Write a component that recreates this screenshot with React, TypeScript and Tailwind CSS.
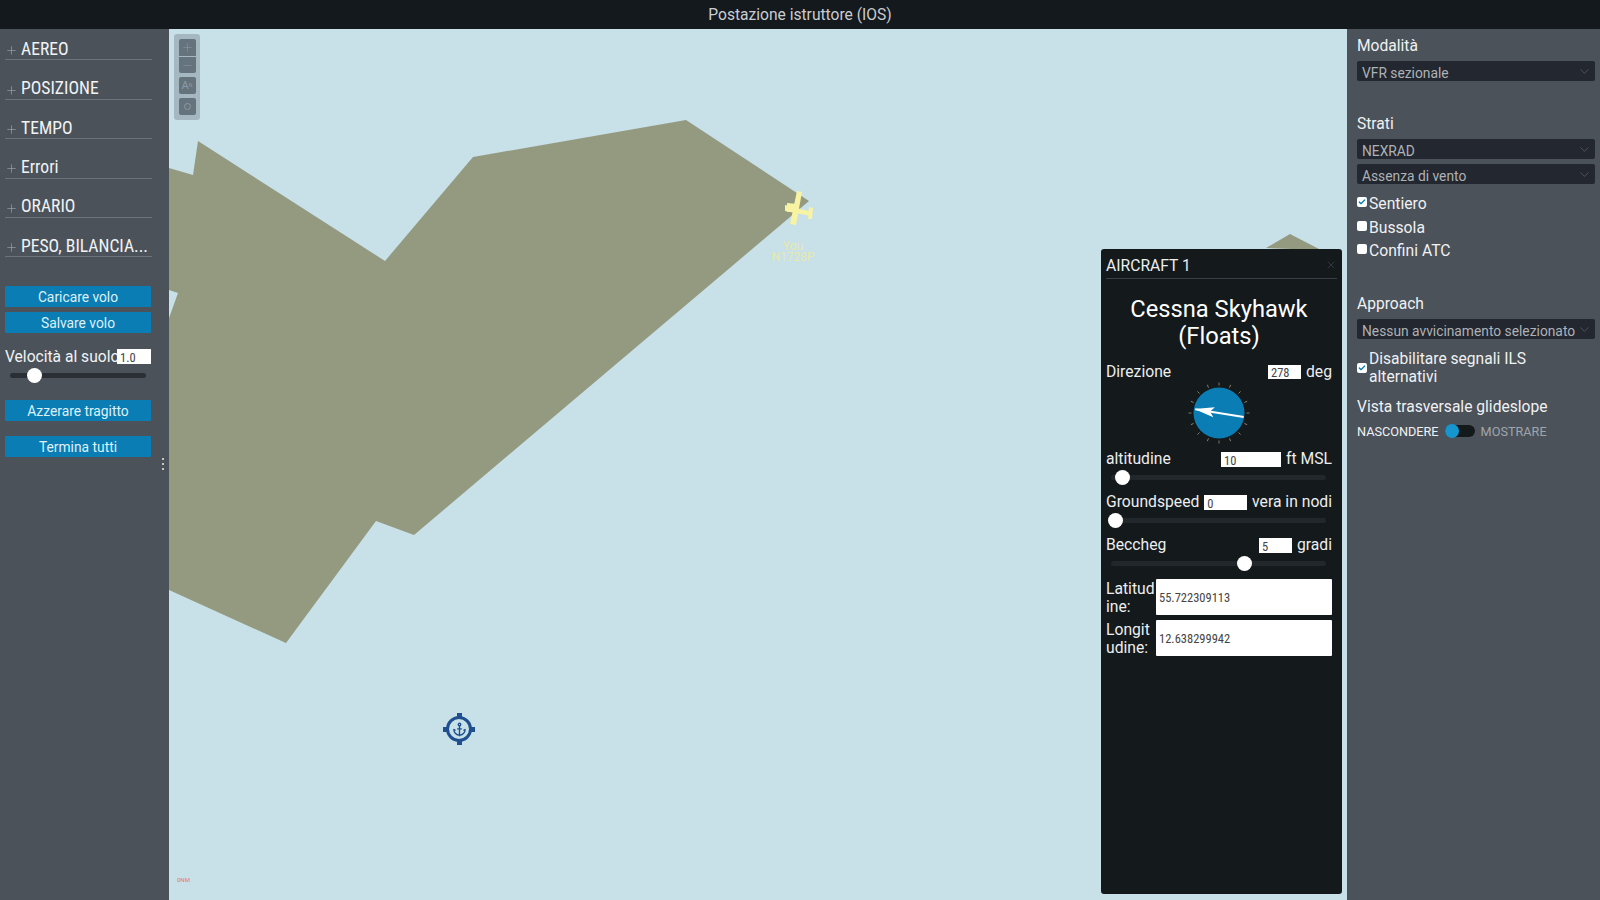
import { Anchor, ChevronDown, Plus, Minus, X, Check } from "lucide-react";

const SECTIONS = ["AEREO", "POSIZIONE", "TEMPO", "Errori", "ORARIO", "PESO, BILANCIA..."];

const LAND = "169,168 193,175 198,141 385,261 473,157 686,120 809,201 414,535 376,521 286,643 169,590 169,318 178,293 169,290";

function Slider({ pos, track = "bg-[#22272c]" }: { pos: number; track?: string }) {
  return (
    <div className={`relative h-[5px] rounded-full ${track}`}>
      <div
        className="absolute top-[-5px] w-[15px] h-[15px] -ml-[7px] rounded-full bg-white"
        style={{ left: pos }}
      />
    </div>
  );
}

function Field({ value, className }: { value: string; className: string }) {
  return (
    <div className={`bg-white text-[#444] text-[12.5px] leading-none pl-[3px] pt-[3px] overflow-hidden [font-stretch:condensed] ${className}`}>
      {value}
    </div>
  );
}

function BlueButton({ label, className = "" }: { label: string; className?: string }) {
  return (
    <div className={`h-[21px] ml-[5px] w-[146px] bg-[#0a7db5] rounded-[1px] text-[#dff1f8] text-[13.8px] leading-[22px] text-center ${className}`}>
      {label}
    </div>
  );
}

function Select({ label, className = "" }: { label: string; className?: string }) {
  return (
    <div className={`h-[20px] w-[238px] bg-[#23272f] rounded-[2px] flex items-center justify-between pl-[5px] pr-[3px] text-[13.8px] text-[#aeb2b7] ${className}`}>
      <span className="leading-[20px] mt-[3px] whitespace-nowrap">{label}</span>
      <ChevronDown size={15} strokeWidth={1} className="text-[#666c74] shrink-0" />
    </div>
  );
}

function CheckRow({ label, checked = false }: { label: string; checked?: boolean }) {
  return (
    <div className="flex items-start h-[23.7px] text-[15.7px] text-[#f0f1f2] leading-[18px]">
      <span className="w-[10px] h-[10px] mt-[2px] mr-[2px] rounded-[2px] bg-white flex items-center justify-center shrink-0">
        {checked && <Check size={8} strokeWidth={4} className="text-[#0a7db5]" />}
      </span>
      {label}
    </div>
  );
}

function Dial() {
  const ticks = Array.from({ length: 16 }, (_, i) => i * 22.5);
  return (
    <svg width="64" height="64" viewBox="-32 -32 64 64" className="mx-auto mt-[-2px]">
      {ticks.map((a) => (
        <line key={a} x1="0" y1="-27.5" x2="0" y2="-30.5" stroke="#9a8f73" strokeWidth="0.8" transform={`rotate(${a})`} />
      ))}
      <circle r="25.5" fill="#0a7db5" />
      <g transform="rotate(-81)">
        <line x1="0" y1="25" x2="0" y2="-24" stroke="#fff" strokeWidth="2" />
        <polygon points="0,-25 5,-5 0,-9 -5,-5" fill="#fff" />
      </g>
    </svg>
  );
}

function AircraftPanel() {
  return (
    <div className="absolute left-[932px] top-[220px] w-[241px] h-[645px] bg-[#14191c] rounded-[3px] px-[5px] text-[15.7px] text-[#eceeef]">
      <div className="relative h-[30px] mb-[17px] border-b border-[#3a4046] leading-[33px]">
        AIRCRAFT 1
        <X size={12} strokeWidth={1} className="absolute right-[0px] top-[10px] text-[#50565c]" />
      </div>
      <div className="text-[23.7px] leading-[27px] text-center text-white pr-[5px]">
        Cessna Skyhawk
        <br />
        (Floats)
      </div>
      <div className="flex items-center justify-between pr-[5px] mt-[11px] h-[22px]">
        <span>Direzione</span>
        <span className="flex items-center gap-[5px]">
          <Field value="278" className="w-[33px] h-[14px] !pt-[2px]" />
          deg
        </span>
      </div>
      <div className="pr-[5px]">
        <Dial />
      </div>
      <div className="flex items-center justify-between pr-[5px] mt-[3px] h-[22px]">
        <span>altitudine</span>
        <span className="flex items-center gap-[5px]">
          <Field value="10" className="w-[60px] h-[15px]" />
          ft MSL
        </span>
      </div>
      <div className="pl-[5px] pr-[11px] mt-[5px]">
        <Slider pos={10.5} />
      </div>
      <div className="flex items-center justify-between pr-[5px] mt-[11px] h-[22px]">
        <span>Groundspeed</span>
        <Field value="0" className="w-[43px] h-[15px]" />
        <span>vera in nodi</span>
      </div>
      <div className="pl-[5px] pr-[11px] mt-[5px]">
        <Slider pos={3.5} />
      </div>
      <div className="flex items-center justify-between pr-[5px] mt-[11px] h-[22px]">
        <span>Beccheg</span>
        <span className="flex items-center gap-[5px]">
          <Field value="5" className="w-[33px] h-[15px]" />
          gradi
        </span>
      </div>
      <div className="pl-[5px] pr-[11px] mt-[5px]">
        <Slider pos={133} />
      </div>
      <div className="grid grid-cols-[50px_176px] gap-y-[4px] mt-[13px] leading-[18px]">
        <span className="pt-[1px]">
          Latitud
          <br />
          ine:
        </span>
        <div className="h-[36px] bg-white rounded-[1px] text-[#444] text-[12.5px] pl-[3px] pt-[1px] flex items-center [font-stretch:condensed]">55.722309113</div>
        <span className="pt-[1px]">
          Longit
          <br />
          udine:
        </span>
        <div className="h-[36px] bg-white rounded-[1px] text-[#444] text-[12.5px] pl-[3px] pt-[1px] flex items-center [font-stretch:condensed]">12.638299942</div>
      </div>
    </div>
  );
}

function MapControls() {
  return (
    <div className="absolute left-[5px] top-[5px] w-[26px] h-[86px] bg-[#a5b8c2] rounded-[3px] flex flex-col items-center pt-[5px] text-[#8c9aa3]">
      <div className="w-[17px] h-[17px] bg-[#65737d] rounded-t-[2px] flex items-center justify-center">
        <Plus size={13} strokeWidth={1} />
      </div>
      <div className="w-[17px] h-[16px] mt-[1px] bg-[#65737d] rounded-b-[2px] flex items-center justify-center">
        <Minus size={13} strokeWidth={1} />
      </div>
      <div className="w-[17px] h-[17px] mt-[4px] bg-[#65737d] rounded-[2px] text-[11px] leading-[17px] text-center">
        A<sup className="text-[5px]">N</sup>
      </div>
      <div className="w-[17px] h-[17px] mt-[4px] bg-[#65737d] rounded-[2px] flex items-center justify-center">
        <span className="w-[7px] h-[7px] rounded-full border border-[#8c9aa3]" />
      </div>
    </div>
  );
}

function MapArea() {
  return (
    <div className="relative flex-1 bg-[#c8e0e8] overflow-hidden">
      <svg className="absolute left-[-169px] top-[-29px]" width="1600" height="900">
        <polygon points={LAND} fill="#949a80" />
        <polygon points="1266,248 1290,234 1321,250" fill="#949a80" />
      </svg>
      <MapControls />
      {/* own aircraft */}
      <svg className="absolute left-[611px] top-[156px]" width="40" height="45" viewBox="0 0 40 45">
        <g fill="#f7f3a3">
          <polygon points="17,6 22,7 16,40 10,39" />
          <polygon points="5,20 32,27 31,31 5,26" />
          <polygon points="29,22 33,23 32,34 28,34" />
          <polygon points="7,18 18,19 18,27 7,27" />
        </g>
      </svg>
      <div className="absolute left-[584px] top-[212px] w-[80px] text-center text-[12px] leading-[11px] text-[#e6e9ad]">
        You
        <br />
        N1728P
      </div>
      {/* anchor fix */}
      <div className="absolute left-[277px] top-[687px] w-[26px] h-[26px] rounded-full border-[3px] border-[#1f4f8f] flex items-center justify-center">
        <Anchor size={15} strokeWidth={2.2} className="text-[#1f4f8f]" />
        <span className="absolute top-[-6px] w-[5px] h-[4px] bg-[#1f4f8f]" />
        <span className="absolute bottom-[-6px] w-[5px] h-[4px] bg-[#1f4f8f]" />
        <span className="absolute left-[-6px] w-[4px] h-[5px] bg-[#1f4f8f]" />
        <span className="absolute right-[-6px] w-[4px] h-[5px] bg-[#1f4f8f]" />
      </div>
      <div className="absolute left-[8px] top-[848px] text-[6px] leading-none text-[#e8737b]">0NM</div>
      <AircraftPanel />
    </div>
  );
}

function LeftPanel() {
  return (
    <div className="relative w-[169px] shrink-0 bg-[#4b525a] text-[#f2f3f4]">
      <div className="pt-[12px]">
        {SECTIONS.map((s) => (
          <div key={s} className="flex items-center h-[19.4px] mb-[20px] ml-[5px] w-[147px] border-b border-[#6d737a] text-[17.6px] [font-stretch:condensed]">
            <Plus size={13} strokeWidth={1} className="mr-[3px] mt-[1px] text-[#b0b4b8] shrink-0" />
            <span className="leading-none whitespace-nowrap mb-[1px]">{s}</span>
          </div>
        ))}
      </div>
      {/* collapses with the last section's margin */}
      <div className="mt-[29px]">
        <BlueButton label="Caricare volo" />
        <BlueButton label="Salvare volo" className="mt-[5px]" />
      </div>
      <div className="relative ml-[5px] w-[146px] h-[16px] mt-[16px] text-[15.6px] leading-[16px] whitespace-nowrap">
        Velocità al suolo
        <Field value="1.0" className="absolute right-0 top-0 w-[34px] h-[15px]" />
      </div>
      <div className="ml-[10px] w-[136px] mt-[8px]">
        <Slider pos={24} track="bg-[#2a2f36]" />
      </div>
      <BlueButton label="Azzerare tragitto" className="mt-[22px]" />
      <BlueButton label="Termina tutti" className="mt-[15px]" />
      <div className="absolute left-[162px] top-[429px] flex flex-col gap-[3px]">
        <span className="w-[2px] h-[2px] bg-[#c2c5c9]" />
        <span className="w-[2px] h-[2px] bg-[#c2c5c9]" />
        <span className="w-[2px] h-[2px] bg-[#c2c5c9]" />
      </div>
    </div>
  );
}

function RightPanel() {
  return (
    <div className="w-[253px] shrink-0 bg-[#4b525a] pl-[10px] pt-[6px] text-[15.6px] text-[#f0f1f2]">
      <div className="leading-[22px] mb-[4px]">Modalità</div>
      <Select label="VFR sezionale" />
      <div className="leading-[22px] mt-[32px] mb-[4px]">Strati</div>
      <Select label="NEXRAD" />
      <Select label="Assenza di vento" className="mt-[5px] mb-[11px]" />
      <CheckRow label="Sentiero" checked />
      <CheckRow label="Bussola" />
      <CheckRow label="Confini ATC" />
      <div className="leading-[22px] mt-[27px] mb-[4px]">Approach</div>
      <Select label="Nessun avvicinamento selezionato" />
      <div className="flex items-center w-[238px] mt-[11px] leading-[18px]">
        <span className="w-[10px] h-[10px] mr-[2px] rounded-[2px] bg-white flex items-center justify-center shrink-0">
          <Check size={8} strokeWidth={4} className="text-[#0a7db5]" />
        </span>
        <span>Disabilitare segnali ILS alternativi</span>
      </div>
      <div className="leading-[22px] mt-[10px]">Vista trasversale glideslope</div>
      <div className="flex items-center mt-[5px] text-[12.7px] h-[16px]">
        <span>NASCONDERE</span>
        <span className="relative w-[30px] h-[12px] ml-[6px] mr-[6px] rounded-full bg-[#14191c]">
          <span className="absolute left-[0px] top-[-1px] w-[14px] h-[14px] rounded-full bg-[#1596cf]" />
        </span>
        <span className="text-[#a0a5ab]">MOSTRARE</span>
      </div>
    </div>
  );
}

export default function App() {
  return (
    <div className="w-[1600px] h-[900px] flex flex-col overflow-hidden font-['Roboto',sans-serif]">
      <div className="h-[29px] shrink-0 bg-[#14191d] text-[#c9cdd1] text-[15.6px] leading-[31px] text-center">
        Postazione istruttore (IOS)
      </div>
      <div className="flex flex-1 min-h-0">
        <LeftPanel />
        <MapArea />
        <RightPanel />
      </div>
    </div>
  );
}
